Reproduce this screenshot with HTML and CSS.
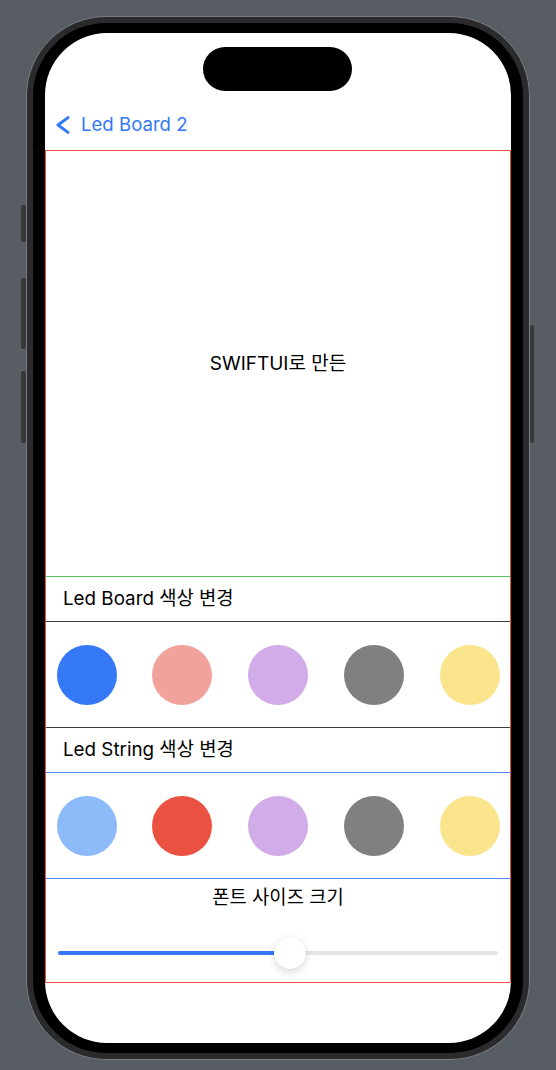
FILE: index.html
```html
<!DOCTYPE html>
<html lang="ko">
<head>
<meta charset="utf-8">
<title>Led Board 2</title>
<link rel="stylesheet" href="styles.css">
</head>
<body>
<div class="device">
  <span class="side-btn btn-action"></span>
  <span class="side-btn btn-vol-up"></span>
  <span class="side-btn btn-vol-down"></span>
  <span class="side-btn btn-power"></span>
  <div class="bezel">
    <div class="screen">
      <div class="island"></div>
      <header class="nav">
        <a class="back" href="#">
          <svg class="chevron" width="14" height="18" viewBox="0 0 14 18" aria-hidden="true">
            <path d="M12 1.6 L2 9 L12 16.4" fill="none" stroke="currentColor" stroke-width="2.9" stroke-linecap="round" stroke-linejoin="round"/>
          </svg>
          <span>Led Board 2</span>
        </a>
      </header>
      <main class="panel">
        <section class="board">
          <p class="board-text">SWIFTUI로 만든</p>
        </section>
        <h2 class="section-title">Led Board 색상 변경</h2>
        <div class="swatches swatches-board">
          <span class="swatch c-blue"></span>
          <span class="swatch c-salmon"></span>
          <span class="swatch c-lavender"></span>
          <span class="swatch c-gray"></span>
          <span class="swatch c-yellow"></span>
        </div>
        <h2 class="section-title">Led String 색상 변경</h2>
        <div class="swatches swatches-string">
          <span class="swatch c-sky"></span>
          <span class="swatch c-red"></span>
          <span class="swatch c-lavender"></span>
          <span class="swatch c-gray"></span>
          <span class="swatch c-yellow"></span>
        </div>
        <section class="font-size">
          <p class="font-size-label">폰트 사이즈 크기</p>
          <div class="slider" style="--value: 52.7%">
            <div class="track"><div class="fill"></div></div>
            <div class="thumb"></div>
          </div>
        </section>
      </main>
    </div>
  </div>
</div>
</body>
</html>
```

FILE: styles.css
```css
* {
  box-sizing: border-box;
}

html,
body {
  margin: 0;
  height: 100%;
}

body {
  background: #585d64;
  font-family: Inter, "Noto Sans CJK KR", sans-serif;
  overflow: hidden;
}

/* device shell */
.device {
  position: relative;
  margin: 16px 0 0 26px;
  width: 504px;
  height: 1044px;
  border: 1px solid #7a7d82;
  border-radius: 80px;
  background: #2b2b2d;
  padding: 6px;
}

.side-btn {
  position: absolute;
  background: #37383a;
  border-radius: 2px;
}

.btn-action {
  left: -6px;
  top: 188px;
  width: 5px;
  height: 37px;
}

.btn-vol-up {
  left: -6px;
  top: 261px;
  width: 5px;
  height: 71px;
}

.btn-vol-down {
  left: -6px;
  top: 354px;
  width: 5px;
  height: 72px;
}

.btn-power {
  right: -5px;
  top: 308px;
  width: 4px;
  height: 118px;
}

.bezel {
  width: 100%;
  height: 100%;
  background: #000;
  border-radius: 73px;
  padding: 10px 12px;
}

.screen {
  position: relative;
  width: 466px;
  height: 1010px;
  background: #fff;
  border-radius: 62px;
  overflow: hidden;
  display: flex;
  flex-direction: column;
}

.island {
  position: absolute;
  top: 14px;
  left: 158px;
  width: 149px;
  height: 44px;
  border-radius: 22px;
  background: #000;
}

/* navigation bar */
.nav {
  height: 117px;
  padding: 69px 0 0 11px;
}

.back {
  height: 44px;
  display: inline-flex;
  align-items: center;
  gap: 11px;
  color: #3478f6;
  text-decoration: none;
  font-size: 18.6px;
}

.chevron {
  display: block;
  margin-top: 1px;
}

/* framed content */
.panel {
  border: 1px solid #ec4f3f;
  display: flex;
  flex-direction: column;
}

.board {
  height: 426px;
  border-bottom: 1px solid #56c45f;
  display: flex;
  align-items: center;
  justify-content: center;
  padding-bottom: 4px;
}

.board-text {
  margin: 0;
  font-size: 19px;
  color: #000;
}

.section-title {
  margin: 0;
  height: 44px;
  display: flex;
  align-items: center;
  padding: 0 0 5px 17px;
  font-size: 18.8px;
  font-weight: 400;
  color: #000;
}

.swatches {
  height: 107px;
  display: flex;
  align-items: center;
  justify-content: space-between;
  padding: 0 10.5px;
}

.swatches-board {
  border-top: 1px solid #3f3f3f;
  border-bottom: 1px solid #3f3f3f;
}

.swatches-string {
  border-top: 1px solid #4a8cf7;
  border-bottom: 1px solid #4a8cf7;
}

.swatch {
  width: 60px;
  height: 60px;
  border-radius: 50%;
}

.c-blue { background: #3579f6; }
.c-salmon { background: #f1a39b; }
.c-lavender { background: #d2abe9; }
.c-gray { background: #808080; }
.c-yellow { background: #fae58c; }
.c-sky { background: #8dbaf8; }
.c-red { background: #eb5140; }

/* font size control */
.font-size {
  height: 103px;
  padding-top: 7px;
}

.font-size-label {
  margin: 0;
  height: 24px;
  line-height: 24px;
  text-align: center;
  font-size: 18.8px;
  color: #000;
}

.slider {
  position: relative;
  margin: 27px 12px 0;
  height: 32px;
  display: flex;
  align-items: center;
}

.track {
  width: 100%;
  height: 4px;
  border-radius: 2px;
  background: #e5e5ea;
  overflow: hidden;
}

.fill {
  width: var(--value);
  height: 100%;
  background: #3478f6;
}

.thumb {
  position: absolute;
  top: 0;
  left: calc(var(--value) - 16px);
  width: 32px;
  height: 32px;
  border-radius: 50%;
  background: #fff;
  box-shadow: 0 3px 8px rgba(0, 0, 0, 0.15), 0 0 1px rgba(0, 0, 0, 0.12);
}
```
